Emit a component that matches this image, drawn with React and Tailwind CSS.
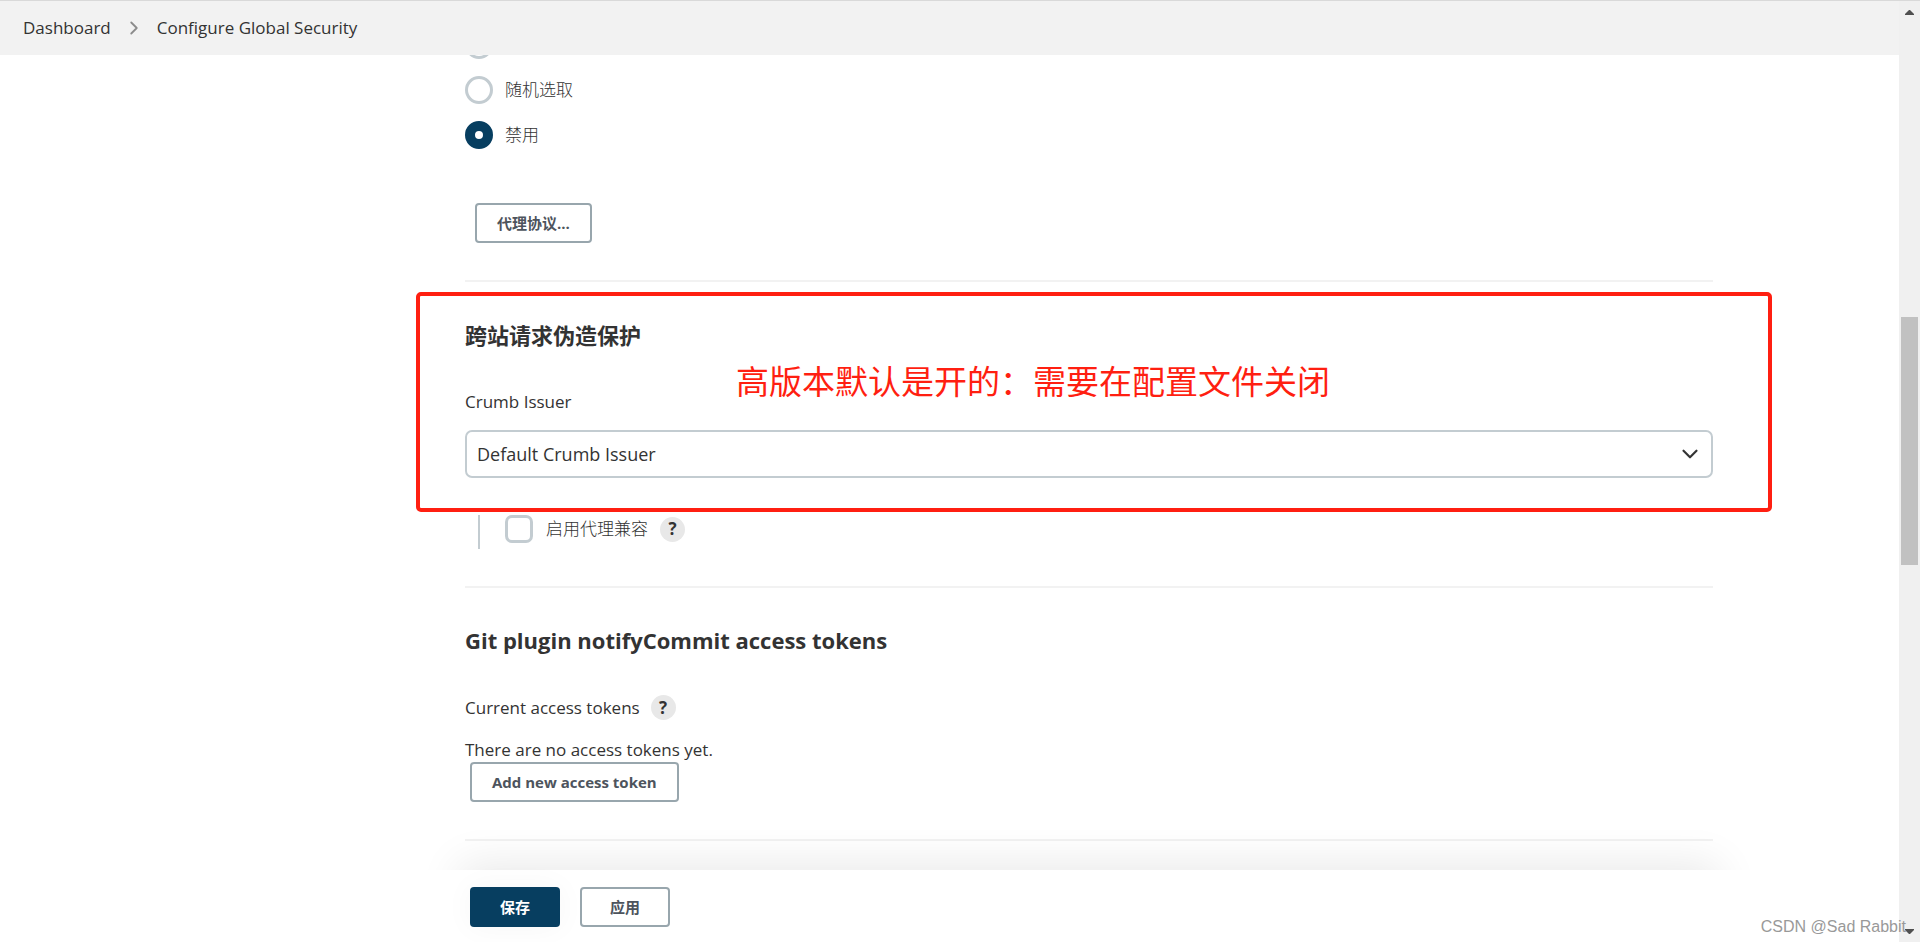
import { ChevronDown, ChevronRight } from "lucide-react";

const RadioOption = ({ id, label, ...props }) => (
	<div className="flex h-7 items-center gap-3">
		<input
			type="radio"
			id={id}
			name="agentPort"
			className="size-7 shrink-0 appearance-none rounded-full border-[3px] border-[#c3ccd1] bg-white checked:border-[10px] checked:border-[#073e60]"
			{...props}
		/>
		{label && (
			<label htmlFor={id} className="font-light">
				{label}
			</label>
		)}
	</div>
);

const HelpButton = ({ topic }) => (
	<button
		type="button"
		aria-label={`Help for ${topic}`}
		className="flex size-[25px] items-center justify-center rounded-full bg-[#e8e8e8] text-[17px] leading-6 font-bold"
	>
		?
	</button>
);

const OutlineButton = ({ className, children }) => (
	<button
		type="button"
		className={`h-10 rounded border-2 border-[#98a6ad] bg-white text-[15px] leading-5 font-bold text-[#4d545d] ${className}`}
	>
		{children}
	</button>
);

const SectionTitle = ({ children }) => (
	<h2 className="text-[22px] leading-[30px] font-bold">{children}</h2>
);

const ScrollBar = () => (
	<div className="relative w-[21px] shrink-0 border-t border-[#d9d9d9] bg-[#f0f0f0]">
		<svg viewBox="0 0 9 5" className="absolute top-[9px] left-[6px] h-[5px] w-[9px]" fill="#505050">
			<path d="M4 0h1l4 4v1H0V4z" />
		</svg>
		<div className="absolute top-[316px] left-[2px] h-[248px] w-[17px] bg-[#c1c1c1]" />
		<svg viewBox="0 0 9 5" className="absolute bottom-[8px] left-[6px] h-[5px] w-[9px]" fill="#505050">
			<path d="M4 5h1l4-4V0H0v1z" />
		</svg>
	</div>
);

const App = () => {
	return (
		<div className="relative flex h-screen overflow-hidden bg-white font-['Open_Sans','Noto_Sans_CJK_SC',sans-serif] text-[17px] leading-6 text-[#333333]">
			<div className="flex min-w-0 flex-1 flex-col">
				<header className="h-[55px] shrink-0 border-t border-[#d9d9d9] bg-[#f2f2f2]">
					<nav className="flex h-full items-center gap-3 pl-[23px]">
						<a href="#dashboard">Dashboard</a>
						<ChevronRight size={22} strokeWidth={2} className="text-[#8c8c8c]" />
						<a href="#security">Configure Global Security</a>
					</nav>
				</header>

				<main className="min-h-0 flex-1 overflow-hidden pr-[186px] pl-[465px]">
					{/* AGENT PORT */}
					<section className="-mt-6 border-b-2 border-[#f2f2f2] pb-[37px]">
						<div className="flex flex-col gap-[17px]">
							<RadioOption id="port-fixed" aria-label="fixed port" />
							<RadioOption id="port-random" label="随机选取" />
							<RadioOption id="port-disabled" label="禁用" defaultChecked />
						</div>
						<OutlineButton className="mt-[54px] ml-[10px] px-5">代理协议...</OutlineButton>
					</section>

					{/* CSRF */}
					<section className="relative border-b-2 border-[#f2f2f2] pt-[38px] pb-[37px]">
						<SectionTitle>跨站请求伪造保护</SectionTitle>
						<label htmlFor="crumb-issuer" className="mt-10 block">
							Crumb Issuer
						</label>
						<div className="relative mt-4">
							<select
								id="crumb-issuer"
								className="block h-12 w-full appearance-none rounded-[7px] border-2 border-[#c3ccd1] bg-white pr-10 pl-[10px] text-[18px]"
							>
								<option>Default Crumb Issuer</option>
							</select>
							<ChevronDown
								size={26}
								strokeWidth={2}
								className="pointer-events-none absolute top-[11px] right-[10px]"
							/>
						</div>
						<div className="mt-[37px] ml-[13px] flex h-[34px] items-start border-l-2 border-[#c3ccd1] pl-[25px]">
							<div className="flex items-center">
								<input
									type="checkbox"
									id="proxy-compat"
									className="size-7 appearance-none rounded-[7px] border-[3px] border-[#c3ccd1] bg-white"
								/>
								<label htmlFor="proxy-compat" className="mr-3 ml-[13px] font-light">
									启用代理兼容
								</label>
								<HelpButton topic="proxy compatibility" />
							</div>
						</div>

						<div className="pointer-events-none absolute top-[10px] right-[-59px] left-[-49px] h-[220px] rounded-[5px] border-4 border-[#ff1f11]">
							<p className="mt-[66px] ml-[316px] text-[33px] leading-10 text-[#ff1f11]">
								高版本默认是开的：需要在配置文件关闭
							</p>
						</div>
					</section>

					{/* GIT PLUGIN */}
					<section className="border-b-2 border-[#f2f2f2] pt-[37px] pb-[37px]">
						<SectionTitle>Git plugin notifyCommit access tokens</SectionTitle>
						<div className="mt-10 flex items-center gap-[11px]">
							<span>Current access tokens</span>
							<HelpButton topic="current access tokens" />
						</div>
						<p className="mt-[18px]">There are no access tokens yet.</p>
						<OutlineButton className="ml-[5px] px-5">Add new access token</OutlineButton>
					</section>
				</main>

				<footer className="relative h-[72px] shrink-0 bg-white pr-[186px] pl-[465px]">
					{/* soft shadow cast upwards by the sticky bar */}
					<div className="pointer-events-none absolute inset-x-0 bottom-full flex h-10 items-end overflow-hidden pr-[186px] pl-[465px]">
						<div className="-mb-20 h-20 w-full shadow-[0_0_44px_6px_rgba(0,0,0,0.09)]" />
					</div>
					<div className="flex gap-5 pt-[17px] pl-[5px]">
						<button
							type="submit"
							className="h-10 w-[90px] rounded bg-[#073e60] text-[15px] leading-5 font-bold text-white shadow-[0_0_30px_rgba(0,0,0,0.04)]"
						>
							保存
						</button>
						<OutlineButton className="w-[90px]">应用</OutlineButton>
					</div>
				</footer>
			</div>

			<ScrollBar />

			<span className="absolute right-[14px] bottom-[3px] font-['Liberation_Sans',sans-serif] text-[16px] text-[#999999]">
				CSDN @Sad Rabbit
			</span>
		</div>
	);
};

export default App;
